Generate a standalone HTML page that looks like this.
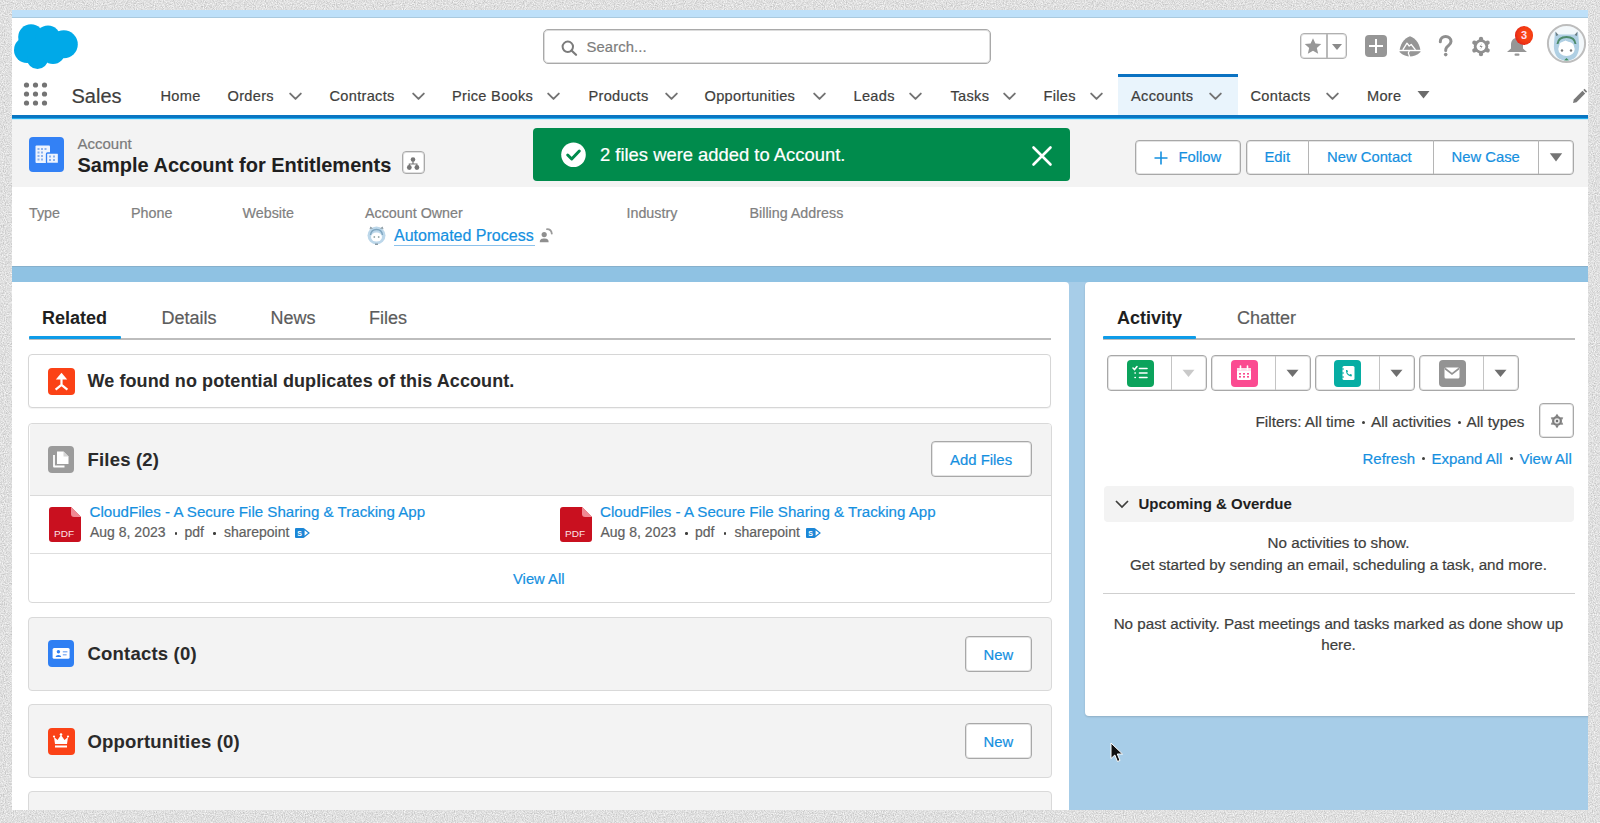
<!DOCTYPE html>
<html><head><meta charset="utf-8">
<style>
*{box-sizing:border-box;margin:0;padding:0}
html,body{width:1600px;height:823px;overflow:hidden;background:#dadada;font-family:"Liberation Sans",sans-serif;color:#181818}
.a{position:absolute;white-space:nowrap;-webkit-text-stroke:0.2px currentColor}
.a[style*="font-weight:700"],.ctitle{-webkit-text-stroke:0.05px currentColor}
#frame{position:absolute;left:12px;top:10px;width:1576px;height:800px;overflow:hidden;background:#a7cde8}
/* all children positioned in page coords via offset wrapper */
#pg{position:absolute;left:-12px;top:-10px;width:1600px;height:823px}
.nav{font-size:14.6px;color:#3e3e3c;top:87.5px;line-height:17px;letter-spacing:0.3px}
.chev{position:absolute;top:92px;width:13px;height:8px}
.lbl{font-size:14.3px;color:#808080;top:205px;line-height:16px}
.btn{position:absolute;background:#fff;border:1px solid #a8a8a8;box-shadow:inset 0 0 0 1px #e4e4e4;border-radius:4px}
.blue{color:#1590df}
.card{position:absolute;left:28px;width:1023.5px;border:1px solid #d9d9d9;border-radius:4px;background:#f3f3f3}
.ctitle{font-size:18.5px;font-weight:700;color:#2a2a2a;line-height:20px;letter-spacing:0.2px}
.ic{position:absolute;border-radius:4px}
.bul{font-size:10px;display:inline-block;width:19px;text-align:center;vertical-align:1px}
.dot{width:3px;height:3px;border-radius:50%;background:#3e3e3c}
.meta{top:524px;font-size:14px;color:#5f5f5f;line-height:17px}
.tx15{font-size:15.2px;color:#3e3e3c;line-height:18px}
</style></head><body>
<svg class="a" style="left:0;top:0" width="1600" height="823"><filter id="nz" x="0" y="0" width="100%" height="100%"><feTurbulence type="fractalNoise" baseFrequency="0.9" numOctaves="2" seed="3"/><feColorMatrix type="matrix" values="0.6 0 0 0 0.44  0.6 0 0 0 0.44  0.6 0 0 0 0.44  0 0 0 0 1"/></filter><rect width="1600" height="823" fill="#dadada"/><rect width="1600" height="823" filter="url(#nz)"/></svg>
<div id="frame"><div id="pg">

<!-- top light blue strip -->
<div class="a" style="left:0;top:10px;width:1600px;height:8px;background:#bee0f9;border-bottom:1px solid #a9c9de"></div>
<!-- header white -->
<div class="a" style="left:0;top:18px;width:1600px;height:97px;background:#fff"></div>
<!-- nav blue line -->
<div class="a" style="left:0;top:115px;width:1600px;height:3px;background:#0a76c2"></div><div class="a" style="left:0;top:118px;width:1600px;height:1px;background:#22adec"></div><div class="a" style="left:0;top:119px;width:1600px;height:1px;background:#c8ebfa"></div>
<!-- logo -->
<svg class="a" style="left:0;top:0" width="100" height="80" viewBox="0 0 100 80">
<g fill="#00a9e8">
<circle cx="31" cy="37" r="12.8"/><circle cx="48" cy="38" r="12.5"/><circle cx="63.8" cy="44.3" r="14"/>
<circle cx="27" cy="50" r="13"/><circle cx="37.5" cy="58.5" r="10.5"/><circle cx="53" cy="52" r="12"/>
<rect x="28" y="40" width="36" height="15"/>
</g></svg>
<!-- search -->
<div class="a" style="left:543px;top:28.5px;width:447.5px;height:35px;border:1px solid #a9a9a9;box-shadow:inset 0 0 0 1px #dcdcdc;border-radius:5px;background:#fff"></div>
<svg class="a" style="left:561px;top:40px" width="17" height="16" viewBox="0 0 17 16"><circle cx="6.8" cy="6.8" r="5.2" fill="none" stroke="#7b7b7b" stroke-width="2"/><path d="M10.5 10.5 L15 14.8" stroke="#7b7b7b" stroke-width="2.2" stroke-linecap="round"/></svg>
<div class="a" style="left:586.5px;top:38.5px;font-size:14.8px;color:#7d7d7d;line-height:17px;letter-spacing:0.1px">Search...</div>
<!-- favorites group -->
<div class="a" style="left:1300px;top:33px;width:47px;height:26px;border:1px solid #b0b0b0;box-shadow:inset 0 0 0 1px #e2e2e2;border-radius:4px;background:#fff"></div>
<div class="a" style="left:1326px;top:34px;width:2px;height:24px;background:#b9b9b9"></div>
<svg class="a" style="left:1304px;top:37px" width="18" height="18" viewBox="0 0 24 24"><path fill="#979797" d="M12 1.5l3.2 7.2 7.8.7-5.9 5.2 1.8 7.7L12 18.2l-6.9 4.1 1.8-7.7L1 9.4l7.8-.7z"/></svg>
<svg class="a" style="left:1331px;top:43px" width="12" height="8" viewBox="0 0 12 8"><path d="M1 1h10L6 7z" fill="#8a8a8a"/></svg>
<!-- plus -->
<div class="a" style="left:1365px;top:35px;width:22px;height:22px;border-radius:4px;background:#969696"></div>
<div class="a" style="left:1369px;top:45px;width:14px;height:2px;background:#fff"></div>
<div class="a" style="left:1375px;top:39px;width:2px;height:14px;background:#fff"></div>
<!-- trailhead -->
<svg class="a" style="left:1398px;top:35px" width="24" height="23" viewBox="0 0 24 23"><path fill="#969696" d="M1.5 17 C1.5 10 6 3 12 1.2 C18 3 22.5 10 22.5 17 C19 20.5 15 21.5 12 21.5 C9 21.5 5 20.5 1.5 17z"/><path d="M1 15.5 H23" stroke="#fff" stroke-width="1.4"/><path d="M4.8 14.8 L9 8.2 L11.2 11 L13.2 9.5 L17.5 14.8" fill="none" stroke="#fff" stroke-width="1.3" stroke-linejoin="round"/><path d="M11.5 15.5 L10.3 18 L11.8 22" fill="none" stroke="#fff" stroke-width="1.2"/></svg>
<!-- help -->
<svg class="a" style="left:1436px;top:33px" width="20" height="26" viewBox="0 0 20 26"><path d="M4.3 8.8 C4.3 5.3 6.8 3.6 9.6 3.6 C12.6 3.6 15 5.6 15 8.6 C15 11.6 12.2 12.6 10.6 14.4 C9.9 15.2 9.7 16 9.7 17.6" fill="none" stroke="#8f8f8f" stroke-width="3" stroke-linecap="round"/><circle cx="9.7" cy="21.6" r="1.8" fill="#8f8f8f"/></svg>
<!-- gear -->
<svg class="a" style="left:1471px;top:36px" width="20" height="21" viewBox="0 0 20 20"><g fill="#8f8f8f"><circle cx="10" cy="10" r="7.2"/><g id="gt"><circle cx="10" cy="2.4" r="2.2"/></g><use href="#gt" transform="rotate(60 10 10)"/><use href="#gt" transform="rotate(120 10 10)"/><use href="#gt" transform="rotate(180 10 10)"/><use href="#gt" transform="rotate(240 10 10)"/><use href="#gt" transform="rotate(300 10 10)"/></g><circle cx="10" cy="10" r="4.4" fill="#fff"/><path d="M10.9 6.8 L8.6 10.5 H10.3 L9.3 13.3 L11.6 9.5 H9.9z" fill="#8f8f8f"/></svg>
<!-- bell -->
<svg class="a" style="left:1506px;top:36px" width="22" height="21" viewBox="0 0 22 21"><path fill="#969696" d="M11 2 C6.5 2 5 5.5 5 9 V12.5 L1 16 H21 L17 12.5 V9 C17 5.5 15.5 2 11 2z"/><rect x="8.5" y="17.6" width="5" height="2.2" rx="1.1" fill="#969696"/></svg>
<div class="a" style="left:1514.8px;top:26px;width:18.5px;height:18.5px;border-radius:50%;background:radial-gradient(circle at 62% 45%,#ff4a12 0,#f23a14 50%,#d0101f 100%);color:#fde;font-size:11px;font-weight:700;text-align:center;line-height:18px">3</div>
<!-- avatar -->
<svg class="a" style="left:1546px;top:23px" width="41" height="41" viewBox="0 0 41 41"><defs><clipPath id="avc"><circle cx="20.5" cy="20.5" r="17"/></clipPath></defs><circle cx="20.5" cy="20.5" r="18.6" fill="#f3f8fb" stroke="#bdbdbd" stroke-width="2"/><g clip-path="url(#avc)"><path d="M9 9 L12 11.5 H29 L32 9 L33 20 C34 30 30 38 20.5 38 C11 38 7 30 8 20z" fill="#afcfe3"/><path d="M9.5 8.5 L12.5 12 L10 13z M31.5 8.5 L28.5 12 L31 13z" fill="#6e7f86"/><path d="M11.5 21 C12 16.5 15.5 14 20.5 14 C25.5 14 29 16.5 29.5 21" fill="none" stroke="#4e8c6c" stroke-width="2"/><ellipse cx="20.5" cy="26" rx="8.2" ry="7" fill="#fff"/><path d="M13.5 21 C15 18.5 17.5 19 19.5 17.5 C21.5 19 25 18.5 27.5 21.5 V24 H13.5z" fill="#fff"/><circle cx="16" cy="27.5" r="1.2" fill="#777"/><circle cx="25" cy="27.5" r="1.2" fill="#777"/><path d="M17.5 38 L20.5 35 L23.5 38z" fill="#3f8c5e"/></g></svg>
<!-- waffle -->
<svg class="a" style="left:22px;top:81px" width="28" height="27" viewBox="0 0 28 27"><g fill="#747474"><circle cx="4.5" cy="4" r="2.6"/><circle cx="13.5" cy="4" r="2.6"/><circle cx="22.5" cy="4" r="2.6"/><circle cx="4.5" cy="13" r="2.6"/><circle cx="13.5" cy="13" r="2.6"/><circle cx="22.5" cy="13" r="2.6"/><circle cx="4.5" cy="22" r="2.6"/><circle cx="13.5" cy="22" r="2.6"/><circle cx="22.5" cy="22" r="2.6"/></g></svg>
<div class="a" style="left:71.5px;top:84px;font-size:20px;color:#3e3e3c;line-height:24px">Sales</div>
<!-- active tab bg -->
<div class="a" style="left:1118px;top:74px;width:119.5px;height:41px;background:#e9f4fc;border-top:3.5px solid #0a72c2"></div>
<!-- nav items -->
<div class="a nav" style="left:160.5px">Home</div>
<div class="a nav" style="left:227.5px">Orders</div>
<div class="a nav" style="left:329.5px">Contracts</div>
<div class="a nav" style="left:452px">Price Books</div>
<div class="a nav" style="left:588.5px">Products</div>
<div class="a nav" style="left:704.5px">Opportunities</div>
<div class="a nav" style="left:853.5px">Leads</div>
<div class="a nav" style="left:950.5px">Tasks</div>
<div class="a nav" style="left:1043.5px">Files</div>
<div class="a nav" style="left:1131px">Accounts</div>
<div class="a nav" style="left:1250.5px">Contacts</div>
<div class="a nav" style="left:1367px">More</div>
<svg class="chev" style="left:289px"><path d="M1.2 1.6l5.3 5.3 5.3-5.3" fill="none" stroke="#737373" stroke-width="1.9" stroke-linecap="round" stroke-linejoin="round"/></svg>
<svg class="chev" style="left:411.5px"><path d="M1.2 1.6l5.3 5.3 5.3-5.3" fill="none" stroke="#737373" stroke-width="1.9" stroke-linecap="round" stroke-linejoin="round"/></svg>
<svg class="chev" style="left:547px"><path d="M1.2 1.6l5.3 5.3 5.3-5.3" fill="none" stroke="#737373" stroke-width="1.9" stroke-linecap="round" stroke-linejoin="round"/></svg>
<svg class="chev" style="left:664.5px"><path d="M1.2 1.6l5.3 5.3 5.3-5.3" fill="none" stroke="#737373" stroke-width="1.9" stroke-linecap="round" stroke-linejoin="round"/></svg>
<svg class="chev" style="left:812.5px"><path d="M1.2 1.6l5.3 5.3 5.3-5.3" fill="none" stroke="#737373" stroke-width="1.9" stroke-linecap="round" stroke-linejoin="round"/></svg>
<svg class="chev" style="left:909px"><path d="M1.2 1.6l5.3 5.3 5.3-5.3" fill="none" stroke="#737373" stroke-width="1.9" stroke-linecap="round" stroke-linejoin="round"/></svg>
<svg class="chev" style="left:1002.5px"><path d="M1.2 1.6l5.3 5.3 5.3-5.3" fill="none" stroke="#737373" stroke-width="1.9" stroke-linecap="round" stroke-linejoin="round"/></svg>
<svg class="chev" style="left:1090px"><path d="M1.2 1.6l5.3 5.3 5.3-5.3" fill="none" stroke="#737373" stroke-width="1.9" stroke-linecap="round" stroke-linejoin="round"/></svg>
<svg class="chev" style="left:1209px"><path d="M1.2 1.6l5.3 5.3 5.3-5.3" fill="none" stroke="#737373" stroke-width="1.9" stroke-linecap="round" stroke-linejoin="round"/></svg>
<svg class="chev" style="left:1325.5px"><path d="M1.2 1.6l5.3 5.3 5.3-5.3" fill="none" stroke="#737373" stroke-width="1.9" stroke-linecap="round" stroke-linejoin="round"/></svg>
<svg class="a" style="left:1417px;top:90px" width="13" height="10" viewBox="0 0 13 10"><path d="M0.5 1h12L6.5 8.5z" fill="#6b6b6b"/></svg>
<svg class="a" style="left:1571px;top:88px" width="17" height="17" viewBox="0 0 17 17"><path d="M2 15 L2.8 11.5 L11.5 2.8 L14.2 5.5 L5.5 14.2z" fill="#7a7a7a"/><path d="M12.3 2 L13.5 0.8 L16.2 3.5 L15 4.7z" fill="#7a7a7a"/></svg>

<!-- page header gray band -->
<div class="a" style="left:0;top:120px;width:1600px;height:67px;background:#f3f3f3"></div>
<!-- fields white -->
<div class="a" style="left:0;top:187px;width:1600px;height:80px;background:#fff;border-bottom:1px solid #86b0cc"></div>
<!-- record header -->
<div class="ic" style="left:28.5px;top:137px;width:35.5px;height:35px;background:#3381f5"></div>
<svg class="a" style="left:28.5px;top:137px" width="36" height="35" viewBox="0 0 36 35"><rect x="6.5" y="8.5" width="14.5" height="17.5" rx="1" fill="#eef4fe"/><rect x="17.5" y="16" width="12" height="10.5" rx="1" fill="#eef4fe" stroke="#3381f5" stroke-width="1.3"/><g fill="#8db3ee"><rect x="8.5" y="11" width="2" height="2"/><rect x="12" y="11" width="2" height="2"/><rect x="15.5" y="11" width="2" height="2"/><rect x="8.5" y="14.5" width="2" height="2"/><rect x="12" y="14.5" width="2" height="2"/><rect x="8.5" y="18" width="2" height="2"/><rect x="12" y="18" width="2" height="2"/><rect x="8.5" y="21.5" width="2" height="2"/><rect x="12" y="21.5" width="2" height="2"/><rect x="20" y="18.5" width="2" height="2"/><rect x="24" y="18.5" width="2" height="2"/><rect x="20" y="22" width="2" height="2"/><rect x="24" y="22" width="2" height="2"/></g></svg>
<div class="a" style="left:77.5px;top:134.5px;font-size:15px;color:#7a7a7a;line-height:17px">Account</div>
<div class="a" style="left:77.5px;top:153.5px;font-size:20px;font-weight:700;color:#1f1f1f;line-height:23px">Sample Account for Entitlements</div>
<div class="a" style="left:402px;top:151px;width:22.5px;height:22.5px;border:1px solid #a9a9a9;box-shadow:inset 0 0 0 1px #e0e0e0;border-radius:4px;background:#fff"></div>
<svg class="a" style="left:402px;top:151px" width="23" height="23" viewBox="0 0 23 23"><g fill="#757575"><circle cx="11" cy="8.5" r="2.3"/><circle cx="7.3" cy="16.5" r="2.4"/><circle cx="14.9" cy="16.5" r="2.4"/></g><path d="M11 10v3.5M7.3 15v-2h7.6v2" stroke="#757575" stroke-width="1.2" fill="none"/></svg>
<!-- toast -->
<div class="a" style="left:533px;top:128px;width:537px;height:53px;background:#008b4c;border-radius:4px"></div>
<svg class="a" style="left:560px;top:142px" width="27" height="26" viewBox="0 0 27 26"><circle cx="13.5" cy="12.8" r="12.3" fill="#fff"/><path d="M7.7 13 L11.7 17 L19.3 9" fill="none" stroke="#008b4c" stroke-width="3" stroke-linecap="round" stroke-linejoin="round"/></svg>
<div class="a" style="left:600px;top:144px;font-size:18.4px;color:#fff;line-height:21px">2 files were added to Account.</div>
<svg class="a" style="left:1031px;top:144.5px" width="22" height="22" viewBox="0 0 22 22"><path d="M2.5 2.5 L19.5 19.5 M19.5 2.5 L2.5 19.5" stroke="#fff" stroke-width="2.6" stroke-linecap="round"/></svg>
<!-- action buttons -->
<div class="btn" style="left:1134.5px;top:139.5px;width:106px;height:35px"></div>
<svg class="a" style="left:1154px;top:151px" width="14" height="14" viewBox="0 0 14 14"><path d="M7 0.5v13M0.5 7h13" stroke="#1590df" stroke-width="1.6"/></svg>
<div class="a blue" style="left:1178.5px;top:148.5px;font-size:14.8px;line-height:17px">Follow</div>
<div class="btn" style="left:1245.5px;top:139.5px;width:328px;height:35px"></div>
<div class="a" style="left:1308px;top:140px;width:1.2px;height:34px;background:#b5b5b5"></div>
<div class="a" style="left:1432.8px;top:140px;width:1.2px;height:34px;background:#b5b5b5"></div>
<div class="a" style="left:1537.7px;top:140px;width:1.2px;height:34px;background:#b5b5b5"></div>
<div class="a blue" style="left:1264.5px;top:148.5px;font-size:14.8px;line-height:17px">Edit</div>
<div class="a blue" style="left:1327px;top:148.5px;font-size:14.8px;line-height:17px">New Contact</div>
<div class="a blue" style="left:1451.5px;top:148.5px;font-size:14.8px;line-height:17px">New Case</div>
<svg class="a" style="left:1549px;top:151.5px" width="14" height="11" viewBox="0 0 14 11"><path d="M0.8 1.2h12.4L7 9.5z" fill="#747474"/></svg>
<!-- fields -->
<div class="a lbl" style="left:29px">Type</div>
<div class="a lbl" style="left:131px">Phone</div>
<div class="a lbl" style="left:242.5px">Website</div>
<div class="a lbl" style="left:365px">Account Owner</div>
<div class="a lbl" style="left:626.5px">Industry</div>
<div class="a lbl" style="left:749.5px">Billing Address</div>
<svg class="a" style="left:366px;top:224px" width="21" height="22" viewBox="0 0 21 22"><circle cx="10.5" cy="11.5" r="9" fill="#bcd7ea"/><path d="M3.5 5 L4.5 2.5 L7 4.5z M17.5 5 L16.5 2.5 L14 4.5z" fill="#8a9aa3"/><path d="M4.5 11 C5 7 8 5.5 10.5 5.5 C13 5.5 16 7 16.5 11" fill="none" stroke="#7fa6bf" stroke-width="1.4"/><ellipse cx="10.5" cy="13" rx="5.5" ry="4.5" fill="#fff"/><circle cx="8.3" cy="13" r="0.9" fill="#9aa"/><circle cx="12.7" cy="13" r="0.9" fill="#9aa"/><rect x="9" y="19.5" width="3" height="1.5" fill="#8a9aa3"/></svg>
<div class="a blue" style="left:394px;top:227px;font-size:16px;line-height:18px">Automated Process</div>
<div class="a" style="left:394px;top:244.5px;width:141px;height:1px;background:#8cc2ec"></div>
<svg class="a" style="left:538px;top:226px" width="16" height="18" viewBox="0 0 16 18"><circle cx="6.2" cy="8.6" r="2.6" fill="#8f8f8f"/><path d="M1.8 16.2 C1.8 13.3 3.5 12.6 6.2 12.6 C8.9 12.6 10.6 13.3 10.6 16.2z" fill="#8f8f8f"/><path d="M9 3.2 C11.5 3.2 13.5 4.8 13.8 7.6" fill="none" stroke="#9a9a9a" stroke-width="1.8" stroke-linecap="round"/></svg>

<!-- blue strip -->
<div class="a" style="left:0;top:267px;width:1600px;height:15px;background:#8fc2e3"></div>

<!-- left panel -->
<div class="a" style="left:0;top:282px;width:1069px;height:560px;background:#fff;border-radius:0 4px 0 0"></div>
<!-- left tabs -->
<div class="a" style="left:42px;top:308px;font-size:18px;font-weight:700;color:#1f1f1f;line-height:21px">Related</div>
<div class="a" style="left:161.5px;top:308px;font-size:18px;color:#5c5c5c;line-height:21px">Details</div>
<div class="a" style="left:270.5px;top:308px;font-size:18px;color:#5c5c5c;line-height:21px">News</div>
<div class="a" style="left:369px;top:308px;font-size:18px;color:#5c5c5c;line-height:21px">Files</div>
<div class="a" style="left:28.5px;top:338px;width:1022.5px;height:1.5px;background:#bdbdbd"></div>
<div class="a" style="left:28.5px;top:336.3px;width:92.5px;height:3px;background:#0e9ce8;border-radius:1px"></div>
<!-- duplicates card -->
<div class="a" style="left:28px;top:353.5px;width:1023px;height:54.5px;background:#fff;border:1px solid #d6d6d6;border-radius:4px;box-shadow:0 1px 1px rgba(0,0,0,.05)"></div>
<div class="ic" style="left:47.5px;top:367.5px;width:27px;height:27px;background:#fb4216"></div>
<svg class="a" style="left:47.5px;top:367.5px" width="27" height="27" viewBox="0 0 27 27"><path d="M13.5 4.8 L19.2 11.6 H7.8z" fill="#fff"/><path d="M13.5 11 V17.5 M7.6 21.6 L13.5 16.8 L19.4 21.6" stroke="#fff" stroke-width="2.2" fill="none" stroke-linejoin="round"/></svg>
<div class="a" style="left:87.5px;top:371px;font-size:18px;font-weight:700;color:#2a2a2a;line-height:21px;letter-spacing:0.08px">We found no potential duplicates of this Account.</div>
<!-- files card -->
<div class="card" style="top:422.5px;height:180px;background:#fff"></div>
<div class="a" style="left:29.5px;top:423.5px;width:1021px;height:72.5px;background:#f3f3f3;border-radius:3px 3px 0 0;border-bottom:1.5px solid #dadada"></div>
<div class="a" style="left:29.5px;top:552.5px;width:1021px;height:1px;background:#dedede"></div>
<div class="ic" style="left:47.5px;top:445.5px;width:26.5px;height:27px;background:#9b9b9b"></div>
<svg class="a" style="left:47.5px;top:445.5px" width="27" height="27" viewBox="0 0 27 27"><path d="M6 9 V20.5 H16.5" fill="none" stroke="#fff" stroke-width="1.8" stroke-linejoin="round"/><path d="M9 5.5 H15.5 L20.5 10.5 V18 H9z" fill="#fff"/><path d="M15.5 5.5 V10.5 H20.5" fill="#d6d6d6"/></svg>
<div class="a ctitle" style="left:87.5px;top:449.5px">Files (2)</div>
<div class="btn" style="left:931px;top:441px;width:101px;height:35.5px"></div>
<div class="a blue" style="left:950px;top:452px;font-size:14.9px;line-height:17px">Add Files</div>
<!-- file 1 -->
<svg class="a" style="left:49px;top:506px" width="33" height="37" viewBox="0 0 33 37"><path d="M3 1 H22 L32 11 V33 A3 3 0 0 1 29 36 H3 A3 3 0 0 1 0 33 V4 A3 3 0 0 1 3 1z" fill="#c9101f"/><path d="M22 1 L32 11 H25 A3 3 0 0 1 22 8z" fill="#f08a93"/><text x="15" y="31" font-size="9.5" fill="#fbe3e6" text-anchor="middle" font-family="Liberation Sans" textLength="20" lengthAdjust="spacingAndGlyphs">PDF</text></svg>
<div class="a blue" style="left:89.5px;top:503px;font-size:15.1px;line-height:18px">CloudFiles - A Secure File Sharing &amp; Tracking App</div>
<div class="a meta" style="left:90.0px">Aug 8, 2023</div><div class="a dot" style="left:174.5px;top:532px;width:2.5px;height:2.5px"></div><div class="a meta" style="left:184.5px">pdf</div><div class="a dot" style="left:213.0px;top:532px;width:2.5px;height:2.5px"></div><div class="a meta" style="left:224.0px">sharepoint</div>
<svg class="a" style="left:295px;top:527px" width="15" height="12" viewBox="0 0 15 12"><rect x="0" y="1" width="9" height="10" rx="1" fill="#1b86d6"/><path d="M9 2 L14 6 L9 10z" fill="none" stroke="#1b86d6" stroke-width="1.2"/><text x="4.5" y="9" font-size="7" font-weight="700" fill="#fff" text-anchor="middle" font-family="Liberation Sans">S</text></svg>
<!-- file 2 -->
<svg class="a" style="left:559.5px;top:506px" width="33" height="37" viewBox="0 0 33 37"><path d="M3 1 H22 L32 11 V33 A3 3 0 0 1 29 36 H3 A3 3 0 0 1 0 33 V4 A3 3 0 0 1 3 1z" fill="#c9101f"/><path d="M22 1 L32 11 H25 A3 3 0 0 1 22 8z" fill="#f08a93"/><text x="15" y="31" font-size="9.5" fill="#fbe3e6" text-anchor="middle" font-family="Liberation Sans" textLength="20" lengthAdjust="spacingAndGlyphs">PDF</text></svg>
<div class="a blue" style="left:600px;top:503px;font-size:15.1px;line-height:18px">CloudFiles - A Secure File Sharing &amp; Tracking App</div>
<div class="a meta" style="left:600.5px">Aug 8, 2023</div><div class="a dot" style="left:685.0px;top:532px;width:2.5px;height:2.5px"></div><div class="a meta" style="left:695.0px">pdf</div><div class="a dot" style="left:723.5px;top:532px;width:2.5px;height:2.5px"></div><div class="a meta" style="left:734.5px">sharepoint</div>
<svg class="a" style="left:805.5px;top:527px" width="15" height="12" viewBox="0 0 15 12"><rect x="0" y="1" width="9" height="10" rx="1" fill="#1b86d6"/><path d="M9 2 L14 6 L9 10z" fill="none" stroke="#1b86d6" stroke-width="1.2"/><text x="4.5" y="9" font-size="7" font-weight="700" fill="#fff" text-anchor="middle" font-family="Liberation Sans">S</text></svg>
<div class="a blue" style="left:513px;top:570.5px;font-size:14.8px;line-height:17px">View All</div>
<!-- contacts card -->
<div class="card" style="top:617px;height:73.5px"></div>
<div class="ic" style="left:47.5px;top:640px;width:26.5px;height:27px;background:#2f7ff3"></div>
<svg class="a" style="left:47.5px;top:640px" width="27" height="27" viewBox="0 0 27 27"><rect x="4.6" y="8" width="17" height="10.8" rx="1.5" fill="#fff"/><circle cx="10.4" cy="11.8" r="1.7" fill="#2f7ff3"/><path d="M7.6 17 C7.9 14.3 12.9 14.3 13.2 17z" fill="#2f7ff3"/><path d="M14.8 11.8h4.6M14.8 14.8h3.8" stroke="#8fb8f5" stroke-width="1.5"/></svg>
<div class="a ctitle" style="left:87.5px;top:644px">Contacts (0)</div>
<div class="btn" style="left:964.5px;top:635.5px;width:67.5px;height:36px"></div>
<div class="a blue" style="left:983.5px;top:646.5px;font-size:14.8px;line-height:17px">New</div>
<!-- opportunities card -->
<div class="card" style="top:704px;height:73.5px"></div>
<div class="ic" style="left:47.5px;top:727.5px;width:27px;height:27px;background:#fb4216"></div>
<svg class="a" style="left:50px;top:730px" width="22" height="21" viewBox="0 0 22 21"><path d="M4 7 L7.5 10 L11 5 L14.5 10 L18 7 L17 14 H5z" fill="#fff"/><rect x="5" y="15.5" width="12" height="2" fill="#fff"/><circle cx="11" cy="4.5" r="1.3" fill="#fff"/><circle cx="4" cy="6.5" r="1.1" fill="#fff"/><circle cx="18" cy="6.5" r="1.1" fill="#fff"/></svg>
<div class="a ctitle" style="left:87.5px;top:731.5px">Opportunities (0)</div>
<div class="btn" style="left:964.5px;top:722.5px;width:67.5px;height:36px"></div>
<div class="a blue" style="left:983.5px;top:733.5px;font-size:14.8px;line-height:17px">New</div>
<!-- next card -->
<div class="card" style="top:791px;height:73.5px"></div>

<!-- right panel -->
<div class="a" style="left:1085px;top:282px;width:520px;height:433.5px;background:#fff;border-radius:4px 0 0 4px;box-shadow:0 1px 2px rgba(0,0,0,.15)"></div>
<!-- right tabs -->
<div class="a" style="left:1117px;top:308px;font-size:18px;font-weight:700;color:#1f1f1f;line-height:21px">Activity</div>
<div class="a" style="left:1237px;top:308px;font-size:18px;color:#5c5c5c;line-height:21px">Chatter</div>
<div class="a" style="left:1102.5px;top:338px;width:472px;height:1.5px;background:#bdbdbd"></div>
<div class="a" style="left:1102.5px;top:336.3px;width:93.5px;height:3px;background:#0e9ce8;border-radius:1px"></div>
<!-- activity buttons -->
<div class="btn" style="left:1107px;top:355px;width:100px;height:35.5px"></div>
<div class="a" style="left:1171px;top:356px;width:1.2px;height:34px;background:#c4c4c4"></div>
<div class="btn" style="left:1211px;top:355px;width:100px;height:35.5px"></div>
<div class="a" style="left:1275px;top:356px;width:1.2px;height:34px;background:#c4c4c4"></div>
<div class="btn" style="left:1315px;top:355px;width:100px;height:35.5px"></div>
<div class="a" style="left:1379px;top:356px;width:1.2px;height:34px;background:#c4c4c4"></div>
<div class="btn" style="left:1419px;top:355px;width:100px;height:35.5px"></div>
<div class="a" style="left:1483px;top:356px;width:1.2px;height:34px;background:#c4c4c4"></div>
<div class="ic" style="left:1126.5px;top:359.5px;width:27px;height:27px;background:#0ba35c"></div>
<svg class="a" style="left:1128px;top:361px" width="24" height="24" viewBox="0 0 24 24"><g stroke="#fff" stroke-width="1.6" fill="none" stroke-linecap="round"><path d="M5 7 L6.5 8.5 L9 5.5"/><path d="M11.5 7.5 H19"/><path d="M7 12 H7.3 M11.5 12 H19"/><path d="M7 16.5 H7.3 M11.5 16.5 H19"/></g></svg>
<div class="ic" style="left:1230.5px;top:359.5px;width:27px;height:27px;background:#fb4b91"></div>
<svg class="a" style="left:1232px;top:361px" width="24" height="24" viewBox="0 0 24 24"><rect x="5" y="7" width="14" height="12" rx="1.5" fill="#fff"/><rect x="5" y="7" width="14" height="3" fill="#fde0ec"/><path d="M8.5 5 V8.5 M15.5 5 V8.5" stroke="#fff" stroke-width="1.6" stroke-linecap="round"/><g fill="#fb4b91"><rect x="7" y="12" width="2" height="1.6"/><rect x="11" y="12" width="2" height="1.6"/><rect x="15" y="12" width="2" height="1.6"/><rect x="7" y="15" width="2" height="1.6"/><rect x="11" y="15" width="2" height="1.6"/><rect x="15" y="15" width="2" height="1.6"/></g></svg>
<div class="ic" style="left:1334px;top:359.5px;width:27px;height:27px;background:#06ada3"></div>
<svg class="a" style="left:1335.5px;top:361px" width="24" height="24" viewBox="0 0 24 24"><rect x="6.5" y="5" width="12" height="14" rx="1.5" fill="#fff"/><path d="M10 9 C10 13 12 15 15.5 15.5 L16 13.8 L14.3 13 L13.5 13.8 C12.5 13.3 11.7 12.5 11.2 11.5 L12 10.7 L11.3 9 z" fill="#06ada3"/><path d="M5 8h3M5 12h3M5 16h3" stroke="#06ada3" stroke-width="1"/></svg>
<div class="ic" style="left:1438.5px;top:359.5px;width:27px;height:27px;background:#939393"></div>
<svg class="a" style="left:1440px;top:361px" width="24" height="24" viewBox="0 0 24 24"><rect x="4.5" y="6.5" width="15" height="11" rx="1.5" fill="#fff"/><path d="M5 7.5 L12 13 L19 7.5" fill="none" stroke="#939393" stroke-width="1.6"/></svg>
<svg class="a" style="left:1182px;top:369px" width="13" height="9" viewBox="0 0 13 9"><path d="M0.5 0.8h12L6.5 8z" fill="#c9c9c9"/></svg>
<svg class="a" style="left:1286px;top:369px" width="13" height="9" viewBox="0 0 13 9"><path d="M0.5 0.8h12L6.5 8z" fill="#6f6f6f"/></svg>
<svg class="a" style="left:1390px;top:369px" width="13" height="9" viewBox="0 0 13 9"><path d="M0.5 0.8h12L6.5 8z" fill="#6f6f6f"/></svg>
<svg class="a" style="left:1494px;top:369px" width="13" height="9" viewBox="0 0 13 9"><path d="M0.5 0.8h12L6.5 8z" fill="#6f6f6f"/></svg>
<!-- filters -->
<div class="a" style="left:1255.5px;top:413px;font-size:15.3px;color:#3e3e3c;line-height:18px">Filters: All time</div>
<div class="a dot" style="left:1362.3px;top:421px"></div>
<div class="a" style="left:1371px;top:413px;font-size:15.3px;color:#3e3e3c;line-height:18px">All activities</div>
<div class="a dot" style="left:1457.5px;top:421px"></div>
<div class="a" style="left:1466.5px;top:413px;font-size:15.3px;color:#3e3e3c;line-height:18px">All types</div>
<div class="btn" style="left:1539px;top:403px;width:35px;height:35px"></div>
<svg class="a" style="left:1548.5px;top:412.5px" width="16" height="16" viewBox="0 0 16 16"><g fill="#7f7f7f"><circle cx="8" cy="8" r="5"/><g id="gt2"><path d="M6.3 3.2 L8 0.8 L9.7 3.2z"/></g><use href="#gt2" transform="rotate(60 8 8)"/><use href="#gt2" transform="rotate(120 8 8)"/><use href="#gt2" transform="rotate(180 8 8)"/><use href="#gt2" transform="rotate(240 8 8)"/><use href="#gt2" transform="rotate(300 8 8)"/></g><circle cx="8" cy="8" r="2.8" fill="#e6e6e6"/><circle cx="8" cy="8" r="1.2" fill="#6f6f6f"/></svg>
<div class="a blue" style="left:1362.5px;top:449.5px;font-size:15px;line-height:18px">Refresh</div>
<div class="a dot" style="left:1422px;top:456.8px"></div>
<div class="a blue" style="left:1431.5px;top:449.5px;font-size:15px;line-height:18px">Expand All</div>
<div class="a dot" style="left:1510px;top:456.8px"></div>
<div class="a blue" style="left:1519.5px;top:449.5px;font-size:15px;line-height:18px">View All</div>
<!-- upcoming -->
<div class="a" style="left:1103.5px;top:486px;width:470px;height:35.5px;background:#f3f3f3;border-radius:4px"></div>
<svg class="a" style="left:1113.5px;top:499px" width="16" height="11" viewBox="0 0 16 11"><path d="M2 2 L8 8 L14 2" fill="none" stroke="#3e3e3c" stroke-width="1.7"/></svg>
<div class="a" style="left:1138.5px;top:495px;font-size:15px;font-weight:700;color:#1f1f1f;line-height:18px">Upcoming &amp; Overdue</div>
<div class="a tx15" style="left:1103.5px;width:470px;text-align:center;top:534.3px">No activities to show.</div>
<div class="a tx15" style="left:1103.5px;width:470px;text-align:center;top:556px">Get started by sending an email, scheduling a task, and more.</div>
<div class="a" style="left:1102.5px;top:593px;width:472px;height:1px;background:#cfcfcf"></div>
<div class="a tx15" style="left:1103.5px;width:470px;text-align:center;top:614.5px">No past activity. Past meetings and tasks marked as done show up</div>
<div class="a tx15" style="left:1103.5px;width:470px;text-align:center;top:636.3px">here.</div>
<!-- cursor -->
<svg class="a" style="left:1110px;top:742px" width="14" height="21" viewBox="0 0 14 21"><path d="M1 1 L1 16.5 L4.8 13 L7.5 19.5 L10 18.4 L7.3 12 L12.5 12z" fill="#111" stroke="#fff" stroke-width="1"/></svg>

</div></div>
</body></html>
